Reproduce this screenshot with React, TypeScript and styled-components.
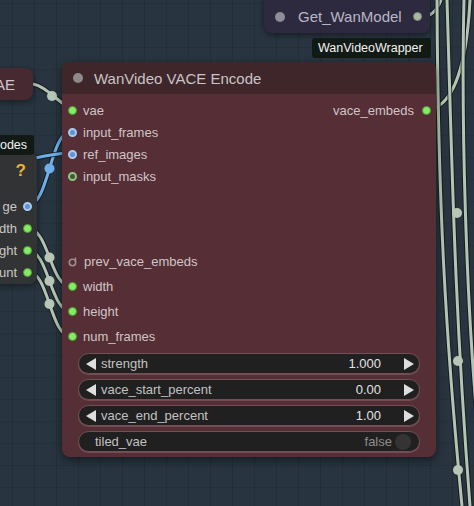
import styled, { createGlobalStyle } from 'styled-components';

const GlobalStyle = createGlobalStyle`
  html, body {
    margin: 0;
    padding: 0;
    background: #28343f;
  }
  body {
    font-family: "Liberation Sans", Arial, sans-serif;
  }
`;

const Canvas = styled.div`
  position: relative;
  width: 474px;
  height: 506px;
  overflow: hidden;
  background-color: #28343f;
  background-image: linear-gradient(90deg, rgba(0, 0, 0, 0.12) 1px, transparent 1px),
    linear-gradient(0deg, rgba(0, 0, 0, 0.08) 1px, transparent 1px);
  background-size: 22px 22px;
  background-position: 12px 4px;
`;

const Links = styled.svg`
  position: absolute;
  left: 0;
  top: 0;
  width: 474px;
  height: 506px;
`;

const GraphNode = styled.div<{ $x: number; $y: number; $w: number; $h: number; $bg: string }>`
  position: absolute;
  left: ${(p) => p.$x}px;
  top: ${(p) => p.$y}px;
  width: ${(p) => p.$w}px;
  height: ${(p) => p.$h}px;
  background: ${(p) => p.$bg};
  border-radius: 8px;
  box-shadow: 0 2px 6px rgba(0, 0, 0, 0.45);
  display: flex;
  flex-direction: column;
  overflow: hidden;
`;

const MainNode = styled.div`
  position: absolute;
  left: 62px;
  top: 62px;
  width: 374px;
  height: 395px;
  background: #562e35;
  border-radius: 8px;
  box-shadow: 0 3px 8px rgba(0, 0, 0, 0.5);
  display: flex;
  flex-direction: column;
  overflow: hidden;
`;

const TitleBar = styled.div`
  height: 32px;
  flex: none;
  background: #3e262b;
  display: flex;
  align-items: center;
  gap: 11px;
  padding-left: 11px;
  color: #c9c4c5;
  font-size: 15px;
`;

const TitleDot = styled.span<{ $color?: string }>`
  width: 10px;
  height: 10px;
  border-radius: 50%;
  background: ${(p) => p.$color ?? '#8e8a8b'};
  flex: none;
`;

const Body = styled.div`
  display: flex;
  flex-direction: column;
  padding-top: 5px;
`;

const SlotRow = styled.div<{ $h: number }>`
  height: ${(p) => p.$h}px;
  display: flex;
  align-items: center;
  justify-content: space-between;
  padding: 0 5px 0 6px;
  font-size: 13px;
  color: #cfc5c7;
`;

const Spacer = styled.div<{ $h: number }>`
  height: ${(p) => p.$h}px;
  flex: none;
`;

const SlotSide = styled.div`
  display: flex;
  align-items: center;
  gap: 6px;
`;

type SlotKind = 'green' | 'blue' | 'mask' | 'link';

const dotStyles: Record<SlotKind, string> = {
  green: 'background: #84ec62; border: 1px solid #4d9a3a;',
  blue: 'background: #5e92d4; border: 2px solid #a9c9ee;',
  mask: 'background: #3f5a36; border: 2px solid #93c584;',
  link: 'background: #aab8a6; border: 1px solid #7d8a7a;',
};

const Dot = styled.span<{ $kind: SlotKind }>`
  width: 9px;
  height: 9px;
  box-sizing: border-box;
  border-radius: 50%;
  flex: none;
  ${(p) => dotStyles[p.$kind]}
`;

const OptionalSlot = () => (
  <svg width="10" height="10" viewBox="0 0 10 10" style={{ flex: 'none' }}>
    <circle cx="4.5" cy="5.5" r="3.2" fill="none" stroke="#9a8e90" strokeWidth="1.6" />
    <line x1="7.5" y1="0.5" x2="7.5" y2="5" stroke="#9a8e90" strokeWidth="1.4" />
  </svg>
);

const Widgets = styled.div`
  display: flex;
  flex-direction: column;
  gap: 5px;
  padding: 4px 16px 0;
`;

const Widget = styled.div`
  height: 21px;
  box-sizing: border-box;
  border-radius: 11px;
  background: #202020;
  border: 1px solid #6f5157;
  box-shadow: 0 1px 0 rgba(150, 110, 118, 0.45);
  display: flex;
  align-items: center;
  padding: 0 8px 0 7px;
  font-size: 13px;
  color: #c2c2c2;
`;

const Arrow = styled.span<{ $dir: 'left' | 'right' }>`
  width: 0;
  height: 0;
  flex: none;
  border-top: 6px solid transparent;
  border-bottom: 6px solid transparent;
  ${(p) =>
    p.$dir === 'left'
      ? 'border-right: 10px solid #dedede; margin-right: 5px;'
      : 'border-left: 10px solid #dedede; margin-left: 23px; margin-right: -3px;'}
`;

const WidgetLabel = styled.span<{ $pad?: number }>`
  flex: 1;
  padding-left: ${(p) => p.$pad ?? 0}px;
`;

const WidgetValue = styled.span<{ $muted?: boolean }>`
  color: ${(p) => (p.$muted ? '#8e8e8e' : '#e2e2e2')};
`;

const Knob = styled.span`
  width: 16px;
  height: 16px;
  border-radius: 50%;
  background: #343434;
  margin-left: 3px;
  margin-right: 0;
  flex: none;
`;

const Tooltip = styled.div<{ $x: number; $y: number; $w: number }>`
  position: absolute;
  left: ${(p) => p.$x}px;
  top: ${(p) => p.$y}px;
  width: ${(p) => p.$w}px;
  height: 20px;
  background: #121a15;
  border-radius: 3px;
  color: #f2f2f2;
  font-size: 12.5px;
  display: flex;
  align-items: center;
  padding-left: 6px;
  box-sizing: border-box;
  white-space: nowrap;
  overflow: hidden;
`;

const CollapsedRow = styled.div<{ $color: string }>`
  height: 100%;
  display: flex;
  align-items: center;
  gap: 11px;
  padding: 0 8px 0 11px;
  color: ${(p) => p.$color};
  font-size: 15px;
`;

const CutTitle = styled.div`
  height: 38px;
  flex: none;
  display: flex;
  align-items: center;
  justify-content: flex-end;
  padding-right: 11px;
  color: #e8b330;
  font-size: 17px;
  font-weight: bold;
`;

const OutRow = styled.div`
  height: 22px;
  display: flex;
  align-items: center;
  justify-content: flex-end;
  gap: 6px;
  padding-right: 5px;
  color: #c8c8c8;
  font-size: 13px;
`;

const LinkPath = ({ d, color }: { d: string; color: string }) => (
  <g>
    <path d={d} fill="none" stroke="#11161a" strokeWidth={5} strokeOpacity={0.8} />
    <path d={d} fill="none" stroke={color} strokeWidth={3} />
  </g>
);

const LINK = '#b4c4b2';
const BLUE = '#6fb0ea';

const spline = (x1: number, y1: number, x2: number, y2: number) => {
  const d = Math.max(Math.abs(x2 - x1) * 0.5, 22);
  return `M ${x1} ${y1} C ${x1 + d} ${y1}, ${x2 - d} ${y2}, ${x2} ${y2}`;
};

const links: { d: string; color: string }[] = [
  { d: 'M 33 84 C 45 86, 56 100, 72 110', color: LINK },
  { d: spline(27, 206, 72, 131), color: BLUE },
  { d: 'M -20 166 C 20 166, 40 153, 72 153', color: BLUE },
  { d: spline(27, 228, 72, 287), color: LINK },
  { d: spline(27, 250, 72, 312), color: LINK },
  { d: spline(27, 271, 72, 337), color: LINK },
  { d: 'M 427 110 C 448 108, 466 80, 470 0', color: LINK },
  { d: 'M 421 17 C 432 17, 438 8, 441 0', color: LINK },
  { d: 'M 437 0 C 438 200, 445 330, 462 506', color: LINK },
  { d: 'M 447 0 C 452 160, 454 300, 470 506', color: LINK },
  { d: 'M 464 0 C 461 120, 466 300, 478 430', color: LINK },
];

const linkDots: { x: number; y: number; color: string }[] = [
  { x: 52, y: 96, color: '#b8c6b5' },
  { x: 49.5, y: 168.5, color: BLUE },
  { x: 49.5, y: 257.5, color: '#b8c6b5' },
  { x: 49.5, y: 281, color: '#b8c6b5' },
  { x: 49.5, y: 304, color: '#b8c6b5' },
  { x: 457, y: 213, color: '#b8c6b5' },
  { x: 458, y: 361, color: '#b8c6b5' },
  { x: 458, y: 470, color: '#b8c6b5' },
];

const inputsTop: { name: string; kind: SlotKind }[] = [
  { name: 'input_frames', kind: 'blue' },
  { name: 'ref_images', kind: 'blue' },
  { name: 'input_masks', kind: 'mask' },
];

const inputsBottom = ['width', 'height', 'num_frames'];

const numberWidgets = [
  { name: 'strength', value: '1.000' },
  { name: 'vace_start_percent', value: '0.00' },
  { name: 'vace_end_percent', value: '1.00' },
];

const leftOutputs: { name: string; kind: SlotKind }[] = [
  { name: 'ge', kind: 'blue' },
  { name: 'dth', kind: 'green' },
  { name: 'ght', kind: 'green' },
  { name: 'unt', kind: 'green' },
];

const App = () => {
  return (
    <Canvas>
      <GlobalStyle />
      <Links viewBox="0 0 474 506">
        {links.map((l, i) => (
          <LinkPath key={i} d={l.d} color={l.color} />
        ))}
        {linkDots.map((p, i) => (
          <circle key={i} cx={p.x} cy={p.y} r={5} fill={p.color} />
        ))}
      </Links>

      <GraphNode $x={-40} $y={68} $w={73} $h={32} $bg="#472a31">
        <CollapsedRow $color="#cfc8c9">
          <span style={{ marginLeft: 'auto', marginRight: 10 }}>AE</span>
        </CollapsedRow>
      </GraphNode>

      <GraphNode $x={-40} $y={152} $w={77} $h={132} $bg="#323334">
        <CutTitle>?</CutTitle>
        <Body style={{ paddingTop: 5 }}>
          {leftOutputs.map((o) => (
            <OutRow key={o.name}>
              {o.name}
              <Dot $kind={o.kind} />
            </OutRow>
          ))}
        </Body>
      </GraphNode>
      <Tooltip $x={-13} $y={135} $w={47}>
        nodes
      </Tooltip>

      <GraphNode $x={264} $y={-10} $w={166} $h={43} $bg="#2d2a40">
        <CollapsedRow $color="#b9b6c6" style={{ paddingTop: 10 }}>
          <TitleDot $color="#8f8c99" />
          <span style={{ flex: 1, marginLeft: 2 }}>Get_WanModel</span>
          <Dot $kind="link" />
        </CollapsedRow>
      </GraphNode>
      <Tooltip $x={312} $y={38} $w={119}>
        WanVideoWrapper
      </Tooltip>

      <MainNode>
        <TitleBar>
          <TitleDot />
          WanVideo VACE Encode
        </TitleBar>
        <Body>
          <SlotRow $h={22}>
            <SlotSide>
              <Dot $kind="green" />
              vae
            </SlotSide>
            <SlotSide style={{ gap: 8 }}>
              vace_embeds
              <Dot $kind="green" />
            </SlotSide>
          </SlotRow>
          {inputsTop.map((s) => (
            <SlotRow key={s.name} $h={22}>
              <SlotSide>
                <Dot $kind={s.kind} />
                {s.name}
              </SlotSide>
            </SlotRow>
          ))}
          <Spacer $h={62} />
          <SlotRow $h={25}>
            <SlotSide>
              <OptionalSlot />
              prev_vace_embeds
            </SlotSide>
          </SlotRow>
          {inputsBottom.map((name) => (
            <SlotRow key={name} $h={25}>
              <SlotSide>
                <Dot $kind="green" />
                {name}
              </SlotSide>
            </SlotRow>
          ))}
          <Widgets>
            {numberWidgets.map((w) => (
              <Widget key={w.name}>
                <Arrow $dir="left" />
                <WidgetLabel>{w.name}</WidgetLabel>
                <WidgetValue>{w.value}</WidgetValue>
                <Arrow $dir="right" />
              </Widget>
            ))}
            <Widget>
              <WidgetLabel $pad={9}>tiled_vae</WidgetLabel>
              <WidgetValue $muted>false</WidgetValue>
              <Knob />
            </Widget>
          </Widgets>
        </Body>
      </MainNode>
    </Canvas>
  );
};

export default App;
